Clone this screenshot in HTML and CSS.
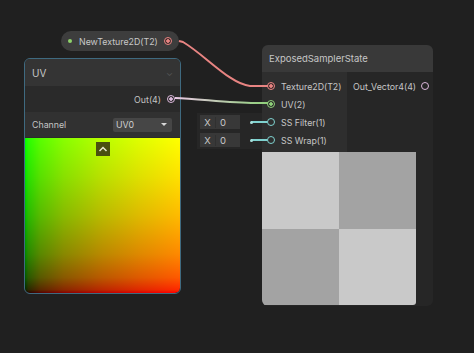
FILE: index.html
```html
<!DOCTYPE html>
<html>
    <head>
        <title>Shader Graph</title>
        <meta charset="UTF-8" />
        <link rel="stylesheet" href="styles.css">
    </head>
    <body>
        <div class="canvas">
            <svg class="edges" width="474" height="353" viewBox="0 0 474 353">
                <defs>
                    <linearGradient id="uv-edge" x1="0" x2="1" y1="0" y2="0">
                        <stop offset="0" stop-color="#e9c8e4" />
                        <stop offset="1" stop-color="#8fd07a" />
                    </linearGradient>
                </defs>
                <path d="M179 41 L183 42 C205 55 230 84 250 86 L268 86" stroke="#e88482" stroke-width="2" fill="none" />
                <path d="M175 98 C200 99 230 103 255 103 L268 103" stroke="url(#uv-edge)" stroke-width="2" fill="none" />
                <path d="M251 122 L268 122" stroke="#7fd2cf" stroke-width="2" fill="none" />
                <path d="M251 140 L268 140" stroke="#7fd2cf" stroke-width="2" fill="none" />
            </svg>

            <div class="property-node">
                <span class="dot"></span>
                <span class="prop-name">NewTexture2D(T2)</span>
                <span class="port port-pink"></span>
            </div>

            <div class="node uv-node">
                <div class="node-title">
                    <span>UV</span>
                    <span class="chevron">&#8964;</span>
                </div>
                <div class="uv-outputs">
                    <span>Out(4)</span>
                    <span class="port port-lilac"></span>
                </div>
                <div class="uv-controls">
                    <span>Channel</span>
                    <div class="dropdown">
                        <span>UV0</span>
                        <span class="caret"></span>
                    </div>
                </div>
                <div class="uv-preview">
                    <div class="collapse-btn">
                        <svg width="10" height="6" viewBox="0 0 10 6">
                            <path d="M1.5 5 L5 1.5 L8.5 5" stroke="#e8e8d0" stroke-width="1.5" fill="none" />
                        </svg>
                    </div>
                </div>
            </div>

            <div class="inline-field field-filter">
                <div class="field-box"><span class="axis">X</span><span class="value">0</span></div>
                <span class="small-dot"></span>
            </div>
            <div class="inline-field field-wrap">
                <div class="field-box"><span class="axis">X</span><span class="value">0</span></div>
                <span class="small-dot"></span>
            </div>

            <div class="node sampler-node">
                <div class="node-title">ExposedSamplerState</div>
                <div class="sampler-body">
                    <div class="inputs">
                        <div class="slot"><span class="port port-pink"></span>Texture2D(T2)</div>
                        <div class="slot"><span class="port port-green"></span>UV(2)</div>
                        <div class="slot"><span class="port port-teal"></span>SS Filter(1)</div>
                        <div class="slot"><span class="port port-teal"></span>SS Wrap(1)</div>
                    </div>
                    <div class="outputs">
                        <div class="slot out">Out_Vector4(4)<span class="port port-lilac-empty"></span></div>
                    </div>
                </div>
                <div class="sampler-preview">
                    <div class="checker">
                        <div class="light"></div>
                        <div class="dark"></div>
                        <div class="dark"></div>
                        <div class="light"></div>
                    </div>
                </div>
            </div>
        </div>
    </body>
</html>
```

FILE: styles.css
```css
body {
    margin: 0;
    background-color: #202020;
    font-family: Inter, "Noto Sans", sans-serif;
    font-size: 8.8px;
    color: #c4c4c4;
}
.canvas {
    position: relative;
    width: 474px;
    height: 353px;
    overflow: hidden;
}
.edges {
    position: absolute;
    left: 0;
    top: 0;
    z-index: 2;
    pointer-events: none;
}

/* ports */
.port {
    display: inline-block;
    flex-shrink: 0;
    box-sizing: border-box;
    width: 8px;
    height: 8px;
    border-radius: 50%;
    position: relative;
    z-index: 3;
}
.port-pink {
    border: 1.5px solid #e88482;
    background: radial-gradient(circle, #e88482 0 1.5px, #3a2a2a 2px);
}
.port-lilac {
    border: 1.5px solid #dcb8dc;
    background: radial-gradient(circle, #dcb8dc 0 1.5px, #2a2a2a 2px);
}
.port-lilac-empty {
    border: 1.5px solid #dcb8dc;
    background: #262626;
}
.port-green {
    border: 1.5px solid #8fd07a;
    background: radial-gradient(circle, #8fd07a 0 1.5px, #2a2a2a 2px);
}
.port-teal {
    border: 1.5px solid #7fd2cf;
    background: #2e2e2e;
}

/* property node */
.property-node {
    position: absolute;
    left: 61px;
    top: 31px;
    width: 118px;
    height: 20px;
    box-sizing: border-box;
    border-radius: 10px;
    background-color: #3d3d3d;
    display: flex;
    align-items: center;
    padding: 0 11px 0 7px;
    gap: 6px;
}
.property-node .dot {
    flex-shrink: 0;
    width: 4px;
    height: 4px;
    border-radius: 50%;
    background-color: #8fd36b;
}
.property-node .prop-name {
    flex: 1;
    color: #c8c8c8;
    font-size: 8.8px;
    margin-left: 1px;
}
.property-node .port {
    margin-right: 3px;
}

/* generic node */
.node {
    position: absolute;
    box-sizing: border-box;
    border-radius: 6px;
    overflow: hidden;
}
.node-title {
    display: flex;
    align-items: center;
    justify-content: space-between;
    background-color: #393939;
    height: 27px;
    padding: 0 7px;
    font-size: 9.5px;
    color: #c6c6c6;
}

/* UV node */
.uv-node {
    left: 24px;
    top: 58px;
    width: 157px;
    height: 236px;
    border: 1px solid #3f6a80;
    background-color: #2b2b2b;
    display: flex;
    flex-direction: column;
}
.uv-node .node-title {
    background-color: #343434;
    height: 27px;
    font-size: 10px;
}
.uv-node .chevron {
    color: #555;
    font-size: 9px;
}
.uv-outputs {
    height: 26px;
    display: flex;
    align-items: center;
    justify-content: flex-end;
    gap: 6px;
    padding-right: 5px;
    background-color: #2a2a2a;
}
.uv-controls {
    height: 25px;
    display: flex;
    align-items: center;
    justify-content: space-between;
    padding: 0 7px;
    background-color: #313131;
}
.dropdown {
    width: 59px;
    height: 14px;
    box-sizing: border-box;
    background-color: #464646;
    border-radius: 2px;
    display: flex;
    align-items: center;
    justify-content: space-between;
    padding: 0 5px 0 3px;
    color: #cfcfcf;
    margin-right: 1px;
}
.caret {
    width: 0;
    height: 0;
    border-left: 3px solid transparent;
    border-right: 3px solid transparent;
    border-top: 3px solid #d8d8d8;
}
.uv-preview {
    flex: 1;
    margin-top: 1px;
    background-image:
        linear-gradient(to bottom, rgb(0, 255, 0) 0%, rgb(0, 224, 0) 25%, rgb(0, 186, 0) 50%, rgb(0, 136, 0) 75%, rgb(0, 89, 0) 90%, rgb(0, 40, 0) 98%, rgb(0, 0, 0) 100%),
        linear-gradient(to right, rgb(0, 0, 0) 0%, rgb(40, 0, 0) 2%, rgb(89, 0, 0) 10%, rgb(136, 0, 0) 25%, rgb(186, 0, 0) 50%, rgb(224, 0, 0) 75%, rgb(255, 0, 0) 100%);
    background-blend-mode: screen;
    border-radius: 0 0 5px 5px;
    display: flex;
    justify-content: center;
    padding-top: 4px;
}
.collapse-btn {
    width: 14px;
    height: 14px;
    background-color: #4a5010;
    display: flex;
    align-items: center;
    justify-content: center;
}

/* inline fields */
.inline-field {
    position: absolute;
    left: 197px;
    width: 65px;
    height: 18px;
    background-color: #262626;
    display: flex;
    align-items: center;
    padding-left: 3px;
    box-sizing: border-box;
}
.field-filter {
    top: 113px;
}
.field-wrap {
    top: 131px;
}
.field-box {
    display: flex;
    height: 14px;
    width: 40px;
    background-color: #383838;
    align-items: center;
    font-size: 9.5px;
    color: #c8c8c8;
}
.field-box .axis {
    width: 15px;
    text-align: center;
    border-right: 1px solid #303030;
}
.field-box .value {
    padding-left: 4px;
}
.small-dot {
    width: 3px;
    height: 3px;
    border-radius: 50%;
    background-color: #a8e0dc;
    margin-left: 10px;
    position: relative;
    z-index: 3;
}

/* sampler node */
.sampler-node {
    left: 262px;
    top: 45px;
    width: 171px;
    height: 261px;
    background-color: #262626;
    display: flex;
    flex-direction: column;
}
.sampler-node .node-title {
    justify-content: flex-start;
    height: 27px;
}
.sampler-body {
    display: flex;
    height: 80px;
}
.inputs {
    width: 85px;
    background-color: #2e2e2e;
    padding-top: 5px;
}
.outputs {
    flex: 1;
    background-color: #262626;
    padding-top: 5px;
}
.slot {
    height: 18px;
    display: flex;
    align-items: center;
    gap: 6px;
    padding-left: 5px;
    color: #c6c6c6;
    white-space: nowrap;
}
.slot.out {
    padding-left: 6px;
    gap: 0;
    justify-content: space-between;
    padding-right: 4px;
}
.sampler-preview {
    flex: 1;
    display: flex;
}
.checker {
    width: 154px;
    height: 153px;
    display: grid;
    grid-template-columns: 1fr 1fr;
    grid-template-rows: 1fr 1fr;
    border-radius: 0 0 3px 3px;
    overflow: hidden;
}
.checker .light {
    background-color: #c9c9c9;
}
.checker .dark {
    background-color: #a3a3a3;
}
```
